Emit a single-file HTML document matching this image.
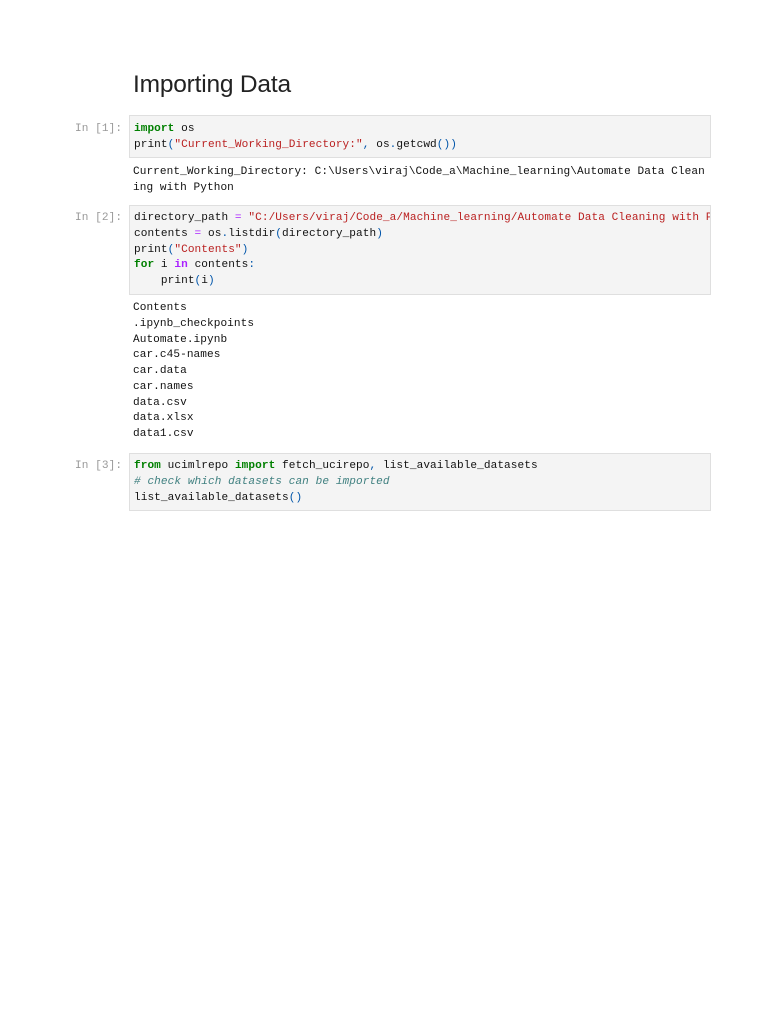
<!DOCTYPE html>
<html><head><meta charset="utf-8"><style>
body{margin:0;width:768px;height:1024px;background:#fff;position:relative;font-family:"Liberation Sans",sans-serif}
h1{position:absolute;left:133px;top:71px;margin:0;font-size:24.5px;font-weight:normal;color:#222;letter-spacing:-0.2px}
.p{position:absolute;left:75px;font-family:"Liberation Mono",monospace;font-size:11.1px;color:#999;line-height:15.75px;white-space:pre;letter-spacing:0.07px}
.box{position:absolute;left:129px;width:580px;background:#f4f4f4;border:1px solid #dfdfdf;overflow:hidden}
.t{position:absolute;left:133px;font-family:"Liberation Mono",monospace;font-size:11.1px;letter-spacing:0.07px;line-height:15.75px;color:#111;white-space:pre;margin:0}
.box .t{left:4px}
.k{color:#008000;font-weight:bold}.s{color:#ba2121}.o{color:#aa22ff}.b{color:#0055aa}.c{color:#408080;font-style:italic}.kw{color:#aa22ff;font-weight:bold}
</style></head><body>
<h1>Importing Data</h1>
<div class="p" style="top:122px">In [1]:</div>
<div class="box" style="top:115px;height:41px"><pre class="t" style="top:6px"><span class="k">import</span> os
print<span class="b">(</span><span class="s">"Current_Working_Directory:"</span><span class="b">,</span> os<span class="b">.</span>getcwd<span class="b">())</span></pre></div>
<pre class="t" style="top:165px">Current_Working_Directory: C:\Users\viraj\Code_a\Machine_learning\Automate Data Clean
ing with Python</pre>
<div class="p" style="top:211px">In [2]:</div>
<div class="box" style="top:205px;height:88px"><pre class="t" style="top:5px">directory_path <span class="o">=</span> <span class="s">"C:/Users/viraj/Code_a/Machine_learning/Automate Data Cleaning with Python"</span>
contents <span class="o">=</span> os<span class="b">.</span>listdir<span class="b">(</span>directory_path<span class="b">)</span>
print<span class="b">(</span><span class="s">"Contents"</span><span class="b">)</span>
<span class="k">for</span> i <span class="kw">in</span> contents<span class="b">:</span>
    print<span class="b">(</span>i<span class="b">)</span></pre></div>
<pre class="t" style="top:301px">Contents
.ipynb_checkpoints
Automate.ipynb
car.c45-names
car.data
car.names
data.csv
data.xlsx
data1.csv</pre>
<div class="p" style="top:459px">In [3]:</div>
<div class="box" style="top:453px;height:56px"><pre class="t" style="top:5px"><span class="k">from</span> ucimlrepo <span class="k">import</span> fetch_ucirepo<span class="b">,</span> list_available_datasets
<span class="c"># check which datasets can be imported</span>
list_available_datasets<span class="b">()</span></pre></div>
</body></html>
